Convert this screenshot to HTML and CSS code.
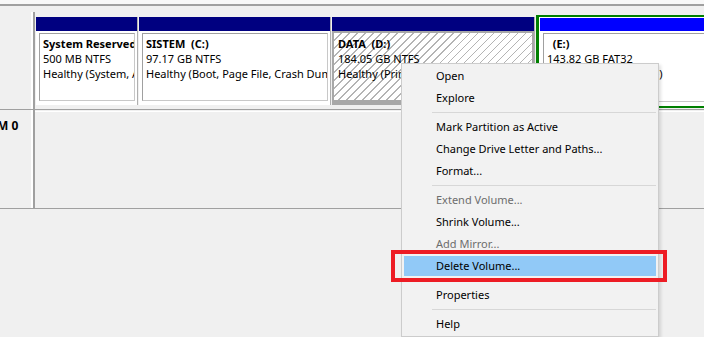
FILE: index.html
```html
<!DOCTYPE html>
<html lang="en">
<head>
    <meta charset="UTF-8">
    <title>Disk Management</title>
    <link rel="stylesheet" href="styles.css">
</head>
<body>
    <div class="top"></div>

    <div class="disk disk-first">
        <div class="disk-label"></div>
        <div class="volumes">
            <div class="vol vol-sys">
                <div class="vol-bar"></div>
                <div class="vol-body">
                    <b>System Reserved</b>
                    <span>500 MB NTFS</span>
                    <span>Healthy (System, Active, Primary Partition)</span>
                </div>
            </div>
            <div class="vol vol-c">
                <div class="vol-bar"></div>
                <div class="vol-body">
                    <b>SISTEM&nbsp; (C:)</b>
                    <span>97.17 GB NTFS</span>
                    <span>Healthy (Boot, Page File, Crash Dump, Primary Partition)</span>
                </div>
            </div>
            <div class="vol vol-data">
                <div class="vol-bar"></div>
                <div class="vol-body">
                    <b>DATA&nbsp; (D:)</b>
                    <span>184.05 GB NTFS</span>
                    <span>Healthy (Primary Partition)</span>
                </div>
            </div>
            <div class="vol vol-e">
                <div class="vol-bar"></div>
                <div class="vol-body">
                    <b>&nbsp;&nbsp;(E:)</b>
                    <span>143.82 GB FAT32</span>
                    <span>Healthy (Logical Drive)</span>
                </div>
            </div>
        </div>
    </div>

    <div class="disk disk-cd">
        <div class="disk-label"><b>M 0</b></div>
        <div class="volumes"></div>
    </div>

    <div class="menu">
        <div class="mi">Open</div>
        <div class="mi">Explore</div>
        <div class="sep"></div>
        <div class="mi">Mark Partition as Active</div>
        <div class="mi">Change Drive Letter and Paths...</div>
        <div class="mi">Format...</div>
        <div class="sep"></div>
        <div class="mi off">Extend Volume...</div>
        <div class="mi">Shrink Volume...</div>
        <div class="mi off">Add Mirror...</div>
        <div class="mi active">Delete Volume...</div>
        <div class="sep"></div>
        <div class="mi">Properties</div>
        <div class="sep"></div>
        <div class="mi">Help</div>
    </div>

    <div class="callout"></div>
</body>
</html>
```

FILE: styles.css
```css
* {
    box-sizing: border-box;
}
body {
    margin: 0;
    height: 337px;
    overflow: hidden;
    background: #f0f0f0;
    font-family: "Noto Sans", "Segoe UI", sans-serif;
    font-size: 11px;
    color: #000;
}
.top {
    height: 6px;
    background: #f8f8f8;
    border-bottom: 2px solid #a0a0a0;
    margin-bottom: 6px;
}
.disk {
    display: flex;
    border-bottom: 1px solid #a0a0a0;
}
.disk-first {
    height: 98px;
}
.disk-cd {
    height: 99px;
}
.disk-label {
    width: 35px;
    flex: none;
    border-right: 2px solid #a0a0a0;
    box-shadow: inset -2px 0 #fff;
    padding-top: 8px;
    font-size: 12px;
    line-height: 15px;
    overflow: hidden;
    white-space: nowrap;
    text-indent: -3px;
}
.disk-cd .volumes {
    border-top: 1px solid #fff;
    margin-top: 1px;
}
.volumes {
    flex: 1;
    display: flex;
    align-items: flex-start;
    padding: 3px 0 0 1px;
    min-width: 0;
}
.vol {
    flex: none;
    height: 88px;
    margin-top: 2px;
    margin-right: 2px;
    background: #fff;
    display: flex;
    flex-direction: column;
    box-shadow: 1px 0 #b0b0b0;
}
.vol-sys {
    width: 101px;
}
.vol-c {
    width: 191px;
}
.vol-data {
    width: 202px;
    background: #a8a8a8;
}
.vol-bar {
    height: 14px;
    flex: none;
    background: #000080;
}
.vol-body {
    flex: 1;
    margin: 2px 2px 4px 3px;
    border: 1px solid #a0a0a0;
    border-right-color: #c8c8c8;
    border-bottom-color: #c8c8c8;
    padding: 2px 0 0 3px;
    overflow: hidden;
    white-space: nowrap;
    line-height: 15px;
}
.vol-body b,
.vol-body span {
    display: block;
}
.vol-data .vol-body {
    margin: 2px 2px 5px 2px;
    border: none;
    padding: 3px 0 0 4px;
    background: repeating-linear-gradient(135deg, #fff 0 4.9px, #b4b4b4 4.9px 5.66px);
}
.vol-e {
    flex: 1;
    height: 93px;
    margin: 0;
    border: 2px solid #008000;
    border-left-width: 3px;
    border-right: none;
    padding: 1px 0 0 1px;
    box-shadow: none;
}
.vol-e .vol-bar {
    height: 13px;
    background: #0000ff;
}
.vol-e .vol-body {
    margin: 2px 0 4px 3px;
    border-right: none;
}

.menu {
    position: absolute;
    left: 401px;
    top: 63px;
    width: 258px;
    display: flex;
    flex-direction: column;
    padding: 1px 0;
    background: #f2f2f2;
    border: 1px solid #cccccc;
    box-shadow: 2px 2px 3px rgba(0, 0, 0, 0.12);
}
.mi {
    height: 20px;
    line-height: 20px;
    margin: 1px 2px;
    padding-left: 32px;
    white-space: nowrap;
}
.mi.off {
    color: #6d6d6d;
}
.mi.active {
    background: #91c9f7;
}
.sep {
    height: 1px;
    margin: 3px 2px 3px 30px;
    background: #d7d7d7;
}
.callout {
    position: absolute;
    left: 391px;
    top: 250px;
    width: 276px;
    height: 32px;
    border: 4px solid #ed1c24;
}
```
